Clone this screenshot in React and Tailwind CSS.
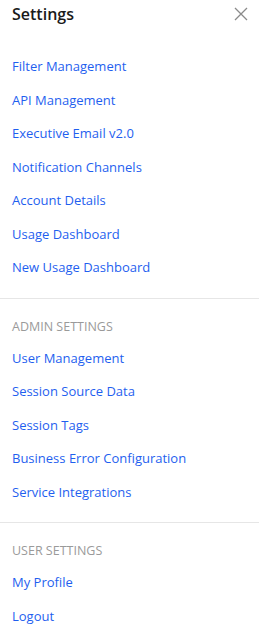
import React from 'react'

const general = [
  'Filter Management',
  'API Management',
  'Executive Email v2.0',
  'Notification Channels',
  'Account Details',
  'Usage Dashboard',
  'New Usage Dashboard',
]
const admin = [
  'User Management',
  'Session Source Data',
  'Session Tags',
  'Business Error Configuration',
  'Service Integrations',
]
const user = ['My Profile', 'Logout']

function LinkRow({ label }) {
  return (
    <a href="#" className="flex h-[33.5px] items-center px-3 text-[13px] text-[#1f5fef]">
      {label}
    </a>
  )
}

function SectionLabel({ children }) {
  return (
    <div className="flex h-[43px] items-end px-3 pb-[7px] text-[12.5px] leading-[17px] text-[#9a9a9a]">
      {children}
    </div>
  )
}

export default function App() {
  return (
    <div className="w-[259px] h-[634px] bg-white font-['Open_Sans',sans-serif]">
      {/* Header */}
      <div className="flex h-[28px] items-center justify-between pl-3 pr-[11px]">
        <h2 className="text-[16px] font-semibold text-[#1a1a1a]">Settings</h2>
        <svg width="14" height="14" viewBox="0 0 14 14" className="text-[#8a8a8a]">
          <path d="M1 1L13 13M13 1L1 13" stroke="currentColor" strokeWidth="1.3" />
        </svg>
      </div>

      <div className="pt-[22px]">
        {general.map(l => <LinkRow key={l} label={l} />)}
      </div>

      <div className="mt-[13px] border-t border-[#e6e6e6]" />
      <SectionLabel>ADMIN SETTINGS</SectionLabel>
      {admin.map(l => <LinkRow key={l} label={l} />)}

      <div className="mt-[13px] border-t border-[#e6e6e6]" />
      <SectionLabel>USER SETTINGS</SectionLabel>
      {user.map(l => <LinkRow key={l} label={l} />)}
    </div>
  )
}
